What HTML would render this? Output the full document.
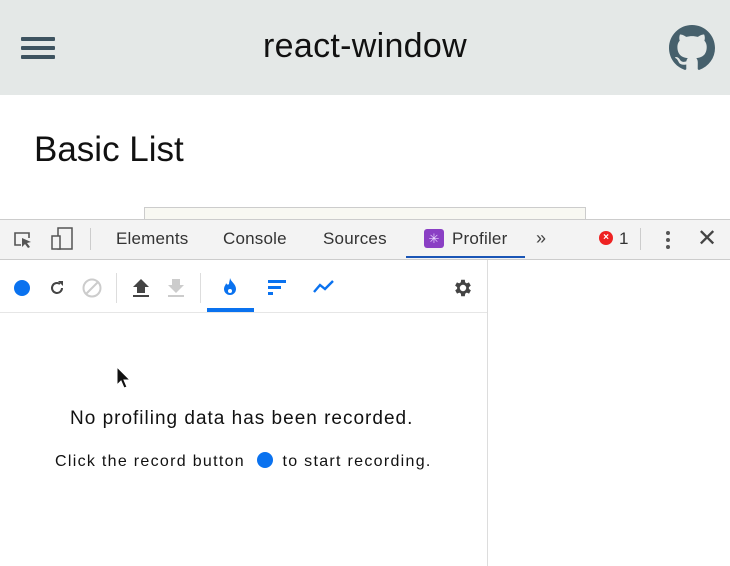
<!DOCTYPE html>
<html><head><meta charset="utf-8"><style>
*{margin:0;padding:0;box-sizing:border-box}
body{width:730px;height:566px;overflow:hidden;background:#fff;font-family:"Liberation Sans",sans-serif;position:relative}
.abs{position:absolute}
.tab{position:absolute;top:229px;font-size:17px;color:#333;letter-spacing:0.2px}
</style></head><body>
<div class="abs" style="left:0;top:0;width:730px;height:95px;background:#e4e8e7"></div>
<div class="abs" style="left:21px;top:37px;width:34px;height:4px;background:#3d5360;border-radius:1px"></div>
<div class="abs" style="left:21px;top:46px;width:34px;height:4px;background:#3d5360;border-radius:1px"></div>
<div class="abs" style="left:21px;top:55px;width:34px;height:4px;background:#3d5360;border-radius:1px"></div>
<div class="abs" style="left:0;top:27px;width:730px;text-align:center;font-size:34px;color:#111;letter-spacing:0.3px">react-window</div>
<svg class="abs" style="left:669px;top:25px" width="46" height="46" viewBox="0 0 16 16"><path fill="#46606c" d="M8 0C3.58 0 0 3.58 0 8c0 3.54 2.29 6.53 5.47 7.59.4.07.55-.17.55-.38 0-.19-.01-.82-.01-1.49-2.01.37-2.53-.49-2.69-.94-.09-.23-.48-.94-.82-1.13-.28-.15-.68-.52-.01-.53.63-.01 1.08.58 1.23.82.72 1.21 1.87.87 2.33.66.07-.52.28-.87.51-1.07-1.78-.2-3.64-.89-3.64-3.95 0-.87.31-1.59.82-2.15-.08-.2-.36-1.02.08-2.12 0 0 .67-.21 2.2.82.64-.18 1.32-.27 2-.27.68 0 1.36.09 2 .27 1.53-1.04 2.2-.82 2.2-.82.44 1.1.16 1.92.08 2.12.51.56.82 1.27.82 2.15 0 3.07-1.87 3.75-3.65 3.95.29.25.54.73.54 1.48 0 1.07-.01 1.93-.01 2.2 0 .21.15.46.55.38A8.013 8.013 0 0016 8c0-4.42-3.58-8-8-8z"/></svg>
<div class="abs" style="left:34px;top:130px;font-size:35px;color:#111">Basic List</div>
<div class="abs" style="left:144px;top:207px;width:442px;height:14px;background:#f8f8f2;border:1px solid #ccc"></div>

<div class="abs" style="left:0;top:219px;width:730px;height:41px;background:#f3f3f3;border-top:1px solid #ccc;border-bottom:1px solid #ccc"></div>
<svg class="abs" style="left:12px;top:229px" width="22" height="22" viewBox="0 0 22 22"><path d="M9 16H3V4h14v5" fill="none" stroke="#555" stroke-width="1.6"/><path d="M10 9l9 4-4 1 3 4-2 1-3-4-3 3z" fill="#555"/></svg>
<svg class="abs" style="left:50px;top:227px" width="24" height="24" viewBox="0 0 24 24"><rect x="8" y="1" width="14" height="21" fill="none" stroke="#555" stroke-width="1.5"/><rect x="2" y="9" width="8" height="13" fill="#f3f3f3" stroke="#555" stroke-width="1.5"/></svg>
<div class="abs" style="left:90px;top:228px;width:1px;height:22px;background:#ccc"></div>
<div class="tab" style="left:116px">Elements</div>
<div class="tab" style="left:223px">Console</div>
<div class="tab" style="left:323px">Sources</div>
<div class="abs" style="left:424px;top:229px;width:20px;height:19px;background:#8a3fc4;border-radius:3px;color:#e9d6ff;font-size:13px;text-align:center;line-height:19px">✳</div>
<div class="tab" style="left:452px">Profiler</div>
<div class="abs" style="left:406px;top:256px;width:119px;height:2px;background:#1a55b5"></div>
<div class="abs" style="left:536px;top:228px;font-size:18px;color:#444">»</div>
<div class="abs" style="left:599px;top:231px;width:14px;height:14px;border-radius:50%;background:#e22;color:#fff;font-size:10px;font-weight:bold;text-align:center;line-height:14px">×</div>
<div class="abs" style="left:619px;top:229px;font-size:17px;color:#333">1</div>
<div class="abs" style="left:640px;top:228px;width:1px;height:22px;background:#ccc"></div>
<div class="abs" style="left:666px;top:231px;width:4px;height:4px;border-radius:50%;background:#555;box-shadow:0 7px 0 #555,0 14px 0 #555"></div>
<div class="abs" style="left:697px;top:224px;font-size:24px;color:#444">✕</div>

<div class="abs" style="left:487px;top:260px;width:1px;height:306px;background:#ddd"></div>
<div class="abs" style="left:0;top:312px;width:487px;height:1px;background:#e6e6e6"></div>
<div class="abs" style="left:14px;top:280px;width:16px;height:16px;border-radius:50%;background:#0a72ef"></div>
<svg class="abs" style="left:47px;top:278px" width="20" height="20" viewBox="0 0 20 20"><path d="M15 10a5 5 0 1 1-2-4" fill="none" stroke="#444" stroke-width="2"/><path d="M11 3h5v5z" fill="#444"/></svg>
<svg class="abs" style="left:81px;top:277px" width="22" height="22" viewBox="0 0 22 22"><circle cx="11" cy="11" r="8.5" fill="none" stroke="#ccc" stroke-width="2"/><path d="M5 17L17 5" stroke="#ccc" stroke-width="2"/></svg>
<div class="abs" style="left:116px;top:273px;width:1px;height:30px;background:#ddd"></div>
<svg class="abs" style="left:130px;top:277px" width="22" height="22" viewBox="0 0 22 22"><path d="M11 2l8 8h-4v6H7v-6H3z" fill="#444"/><rect x="3" y="18" width="16" height="2" fill="#444"/></svg>
<svg class="abs" style="left:165px;top:277px" width="22" height="22" viewBox="0 0 22 22"><path d="M11 16l8-8h-4V2H7v6H3z" fill="#ccc"/><rect x="3" y="18" width="16" height="2" fill="#ccc"/></svg>
<div class="abs" style="left:200px;top:273px;width:1px;height:30px;background:#ddd"></div>
<svg class="abs" style="left:221px;top:277px" width="18" height="20" viewBox="0 0 18 20"><path d="M9 1c1 4 6 6 6 11a6 6 0 0 1-12 0c0-3 2-4 2-6 1 2 2 2 3 1 0-2 1-4 1-6z" fill="#0a72ef"/><circle cx="9" cy="14" r="2" fill="#fff"/></svg>
<div class="abs" style="left:207px;top:308px;width:47px;height:4px;background:#0a72ef"></div>
<div class="abs" style="left:268px;top:280px;width:18px;height:3px;background:#0a72ef"></div>
<div class="abs" style="left:268px;top:286px;width:13px;height:3px;background:#0a72ef"></div>
<div class="abs" style="left:268px;top:292px;width:5px;height:3px;background:#0a72ef"></div>
<svg class="abs" style="left:312px;top:279px" width="24" height="16" viewBox="0 0 24 16"><path d="M2 13l6-7 5 4 8-8" fill="none" stroke="#0a72ef" stroke-width="2.4"/></svg>
<svg class="abs" style="left:452px;top:277px" width="22" height="22" viewBox="0 0 24 24"><path fill="#444" d="M19.4 13a7.5 7.5 0 0 0 0-2l2.1-1.6-2-3.5-2.5 1a7 7 0 0 0-1.7-1L15 3h-4l-.4 2.9a7 7 0 0 0-1.7 1l-2.5-1-2 3.5L6.6 11a7.5 7.5 0 0 0 0 2l-2.1 1.6 2 3.5 2.5-1a7 7 0 0 0 1.7 1L11 21h4l.4-2.9a7 7 0 0 0 1.7-1l2.5 1 2-3.5zM13 15.5a3.5 3.5 0 1 1 0-7 3.5 3.5 0 0 1 0 7z" transform="translate(-1 0)"/></svg>

<svg class="abs" style="left:116px;top:366px" width="16" height="24" viewBox="0 0 16 24"><path d="M1 1v18l4-4 3 7 3-1-3-7h6z" fill="#111" stroke="#fff" stroke-width="1"/></svg>
<div class="abs" style="left:70px;top:408px;font-size:19px;color:#111;letter-spacing:1px;white-space:nowrap">No profiling data has been recorded.</div>
<div class="abs" style="left:55px;top:452px;font-size:16px;color:#111;letter-spacing:1.3px;white-space:nowrap">Click the record button <span style="display:inline-block;width:16px;height:16px;border-radius:50%;background:#0a72ef;vertical-align:-2px;margin:0 4px 0 6px"></span> to start recording.</div>
</body></html>
